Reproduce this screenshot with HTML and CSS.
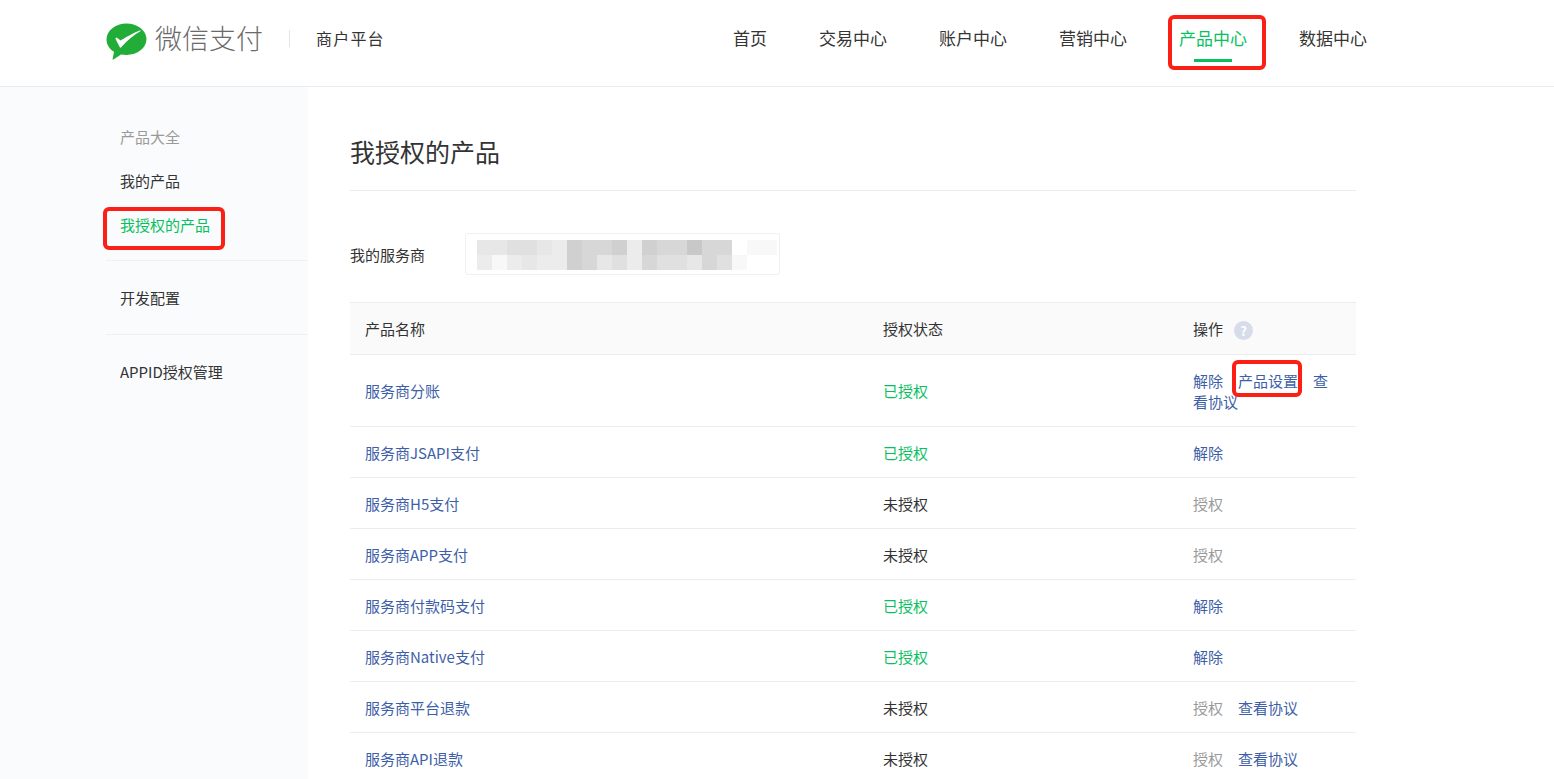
FILE: index.html
```html
<!DOCTYPE html>
<html lang="zh-CN">
<head>
<meta charset="utf-8">
<title>我授权的产品</title>
<link rel="stylesheet" href="styles.css">
</head>
<body>
<header class="topbar">
  <div class="brand">
    <svg class="logo-icon" viewBox="0 0 41 37" width="41" height="37" aria-hidden="true">
      <path fill="#22ac38" d="M20.5 0.5C9.5 0.5 0.5 7.6 0.5 16.4c0 5 2.9 9.5 7.5 12.4L6.6 36c-.1.6.3.9.8.6l7.6-5.1c1.800.3 3.600.5 5.500.5 11 0 20-7.100 20-15.900C40.500 7.600 31.500.5 20.500.5z"/>
      <path fill="#fff" d="M9.300 15.400l1.400-.9 3.900 3.100c3.500-2.500 12-7.300 19.600-10.400l.5.700C28.500 11.500 21.500 17 14.900 24.400c-.4.400-.9.300-1.100-.1z"/>
    </svg>
    <span class="logo-text">微信支付</span>
    <span class="brand-sep"></span>
    <span class="brand-sub">商户平台</span>
  </div>
  <nav class="nav">
    <a class="nav-item">首页</a>
    <a class="nav-item">交易中心</a>
    <a class="nav-item">账户中心</a>
    <a class="nav-item">营销中心</a>
    <a class="nav-item active">产品中心</a>
    <a class="nav-item">数据中心</a>
  </nav>
</header>
<div class="layout">
  <aside class="sidebar">
    <div class="side-group first">
      <div class="side-title">产品大全</div>
      <a class="side-item">我的产品</a>
      <a class="side-item current">我授权的产品</a>
    </div>
    <div class="side-group">
      <a class="side-item">开发配置</a>
    </div>
    <div class="side-group">
      <a class="side-item">APPID授权管理</a>
    </div>
  </aside>
  <main class="content">
    <h1 class="page-title">我授权的产品</h1>
    <div class="provider">
      <span class="provider-label">我的服务商</span>
      <div class="provider-box">
        <div class="mosaic">
          <i class="m2"></i><i class="m2"></i><i class="m3"></i><i class="m3"></i><i class="m2"></i><i class="m1"></i><i class="m5"></i><i class="m4"></i><i class="m4"></i><i class="m5"></i><i class="m1"></i><i class="m5"></i><i class="m4"></i><i class="m4"></i><i class="m6"></i><i class="m4"></i><i class="m4"></i><i class="m0"></i><i class="m7"></i><i class="m7"></i>
          <i class="m1"></i><i class="m7"></i><i class="m1"></i><i class="m2"></i><i class="m1"></i><i class="m1"></i><i class="m5"></i><i class="m4"></i><i class="m2"></i><i class="m3"></i><i class="m1"></i><i class="m4"></i><i class="m3"></i><i class="m3"></i><i class="m2"></i><i class="m4"></i><i class="m3"></i><i class="m7"></i><i class="m0"></i><i class="m0"></i>
        </div>
      </div>
    </div>
    <table class="products">
      <thead>
        <tr><th class="col-name">产品名称</th><th class="col-state">授权状态</th><th class="col-ops">操作<span class="help">?</span></th></tr>
      </thead>
      <tbody>
        <tr class="tall"><td><a class="link">服务商分账</a></td><td class="on">已授权</td><td class="ops"><a class="link">解除</a><a class="link">产品设置</a><a class="link">查看协议</a></td></tr>
        <tr><td><a class="link">服务商JSAPI支付</a></td><td class="on">已授权</td><td class="ops"><a class="link">解除</a></td></tr>
        <tr><td><a class="link">服务商H5支付</a></td><td>未授权</td><td class="ops"><a class="muted">授权</a></td></tr>
        <tr><td><a class="link">服务商APP支付</a></td><td>未授权</td><td class="ops"><a class="muted">授权</a></td></tr>
        <tr><td><a class="link">服务商付款码支付</a></td><td class="on">已授权</td><td class="ops"><a class="link">解除</a></td></tr>
        <tr><td><a class="link">服务商Native支付</a></td><td class="on">已授权</td><td class="ops"><a class="link">解除</a></td></tr>
        <tr><td><a class="link">服务商平台退款</a></td><td>未授权</td><td class="ops"><a class="muted">授权</a><a class="link">查看协议</a></td></tr>
        <tr><td><a class="link">服务商API退款</a></td><td>未授权</td><td class="ops"><a class="muted">授权</a><a class="link">查看协议</a></td></tr>
      </tbody>
    </table>
  </main>
</div>
<div class="mark mark-nav"></div>
<div class="mark mark-side"></div>
<div class="mark mark-op"></div>
</body>
</html>
```
FILE: styles.css
```css
* { box-sizing: border-box; }
html, body { margin: 0; height: 779px; overflow: hidden; background: #fff; }
body {
  position: relative;
  font-family: "Noto Sans CJK SC", "Noto Sans", sans-serif;
  font-size: 15px;
  color: #333;
}
i { display: block; }

.topbar {
  height: 87px;
  border-bottom: 1px solid #e9ebf2;
  padding: 0 187px 0 106px;
  display: flex;
  align-items: center;
  justify-content: space-between;
}
.brand { display: flex; align-items: center; height: 36px; margin-top: -10px; }
.logo-icon { display: block; margin-top: 6px; }
.logo-text { margin-left: 8px; font-size: 27px; line-height: 36px; color: #6a6a6a; font-weight: 300; }
.brand-sep { width: 1px; height: 17px; background: #e5e5e5; margin: 0 26px; }
.brand-sub { font-size: 16px; letter-spacing: 1.200px; color: #333; }

.nav { display: flex; gap: 52px; margin-top: -10px; }
.nav-item { position: relative; font-size: 17px; line-height: 24px; color: #353535; }
.nav-item.active { color: #07c160; }
.nav-item.active::after {
  content: "";
  position: absolute;
  left: 15px;
  right: 15px;
  top: 33px;
  height: 3px;
  background: #07c160;
}

.layout { display: flex; height: 692px; }
.sidebar { flex: 0 0 308px; background: #fafbfd; padding: 27px 0 0 106px; }
.side-group { border-top: 1px solid #eff0f4; padding: 15px 0 14px 14px; }
.side-group.first { border-top: 0; padding: 12px 0 13px 14px; }
.side-title { font-size: 15px; line-height: 22px; color: #9a9a9a; margin-bottom: 22px; }
.side-item { display: block; line-height: 22px; color: #333; padding: 11px 0; }
.side-title + .side-item { padding: 0 0 11px; margin-top: 0; }
.side-item.current { color: #07c160; }

.content { flex: 0 0 1006px; margin-left: 42px; }
.page-title {
  margin: 0;
  height: 104px;
  padding-top: 46px;
  border-bottom: 1px solid #ebebeb;
  font-size: 25px;
  line-height: 36px;
  font-weight: 400;
  color: #333;
}
.provider { display: flex; align-items: center; margin-top: 42px; height: 42px; }
.provider-label { width: 115px; font-size: 15px; }
.provider-box {
  width: 315px;
  height: 42px;
  border: 1px solid #f0f0f0;
  border-radius: 3px;
  padding: 6px 0 0 11px;
}
.mosaic { display: grid; grid-template-columns: repeat(20, 15px); grid-auto-rows: 15px; }
.m0 { background: #fff; }
.m7 { background: #f8f8f8; }
.m1 { background: #ececec; }
.m2 { background: #e7e7e7; }
.m3 { background: #e0e0e0; }
.m4 { background: #d7d7d7; }
.m5 { background: #d0d0d0; }
.m6 { background: #c8c8c8; }

.products {
  width: 1006px;
  margin-top: 27px;
  table-layout: fixed;
  border-collapse: collapse;
}
.col-name { width: 518px; }
.col-state { width: 310px; }
.col-ops { width: 178px; }
.products th, .products td {
  padding: 0 15px;
  text-align: left;
  font-weight: 400;
  height: 51px;
  line-height: 21px;
  border-bottom: 1px solid #ededed;
}
.products th { background: #fafafa; border-top: 1px solid #ededed; height: 52px; color: #333; }
.products tr.tall td { height: 72px; }
.products td.on { color: #07c160; }
.ops { word-break: break-all; }
.ops a + a { margin-left: 15px; }
.link { color: #3e5fa8; }
.muted { color: #9a9a9a; }
.help {
  display: inline-block;
  width: 19px;
  height: 19px;
  margin-left: 11px;
  border-radius: 50%;
  background: #d6dce9;
  color: #fff;
  font-size: 13px;
  font-weight: 700;
  line-height: 19px;
  text-align: center;
  vertical-align: -1px;
}

.mark {
  position: absolute;
  border: 4px solid #fb2015;
  border-radius: 6px;
}
.mark-nav { left: 1168px; top: 15px; width: 98px; height: 55px; }
.mark-side { left: 103px; top: 207px; width: 122px; height: 43px; }
.mark-op { left: 1232px; top: 360px; width: 70px; height: 37px; }
```
